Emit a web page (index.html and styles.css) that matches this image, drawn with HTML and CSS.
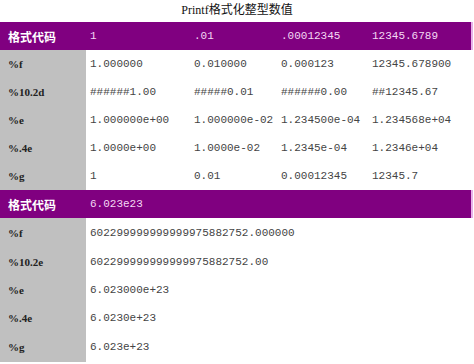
FILE: index.html
```html
<!DOCTYPE html>
<html>
<head>
<meta charset="utf-8">
<link rel="stylesheet" href="styles.css">
</head>
<body>
<div class="title">Printf格式化整型数值</div>
<table class="fmt">
<colgroup><col class="c1"><col class="c2"><col class="c3"><col class="c4"><col class="c5"></colgroup>
<tr class="head"><th>格式代码</th><td>1</td><td>.01</td><td>.00012345</td><td>12345.6789</td></tr>
<tr><th>%f</th><td>1.000000</td><td>0.010000</td><td>0.000123</td><td>12345.678900</td></tr>
<tr><th>%10.2d</th><td>######1.00</td><td>#####0.01</td><td>######0.00</td><td>##12345.67</td></tr>
<tr><th>%e</th><td>1.000000e+00</td><td>1.000000e-02</td><td>1.234500e-04</td><td>1.234568e+04</td></tr>
<tr><th>%.4e</th><td>1.0000e+00</td><td>1.0000e-02</td><td>1.2345e-04</td><td>1.2346e+04</td></tr>
<tr><th>%g</th><td>1</td><td>0.01</td><td>0.00012345</td><td>12345.7</td></tr>
<tr class="head"><th>格式代码</th><td colspan="4">6.023e23</td></tr>
<tr class="tall"><th>%f</th><td colspan="4">602299999999999975882752.000000</td></tr>
<tr><th>%10.2e</th><td colspan="4">602299999999999975882752.00</td></tr>
<tr><th>%e</th><td colspan="4">6.023000e+23</td></tr>
<tr><th>%.4e</th><td colspan="4">6.0230e+23</td></tr>
<tr class="tall"><th>%g</th><td colspan="4">6.023e+23</td></tr>
</table>
</body>
</html>
```
FILE: styles.css
```css
html, body { margin: 0; padding: 0; background: #fff; }
.title {
  font-family: "Liberation Serif", "Noto Sans CJK SC", serif;
  font-size: 12px;
  text-align: center;
  height: 22px;
  line-height: 21px;
  color: #111;
}
.fmt {
  border-collapse: collapse;
  width: 472px;
  table-layout: fixed;
}
.c1 { width: 86px; }
.c2 { width: 104px; }
.c3 { width: 87px; }
.c4 { width: 91px; }
.c5 { width: 104px; }
.fmt th, .fmt td {
  height: 28px;
  padding: 0 0 0 5px;
  text-align: left;
  vertical-align: middle;
  white-space: nowrap;
  overflow: hidden;
}
.fmt tr.tall th, .fmt tr.tall td { height: 30px; }
.fmt th {
  background: #c0c0c0;
  font-family: "Liberation Serif", serif;
  font-weight: bold;
  font-size: 11px;
  color: #222;
  padding-left: 8px;
}
.fmt td {
  font-family: "Liberation Mono", monospace;
  font-size: 11px;
  color: #444;
  padding-left: 4px;
}
.fmt tr.head th, .fmt tr.head td {
  background: #800080;
  color: #f4d8f4;
}
.fmt tr.head th {
  font-family: "Noto Sans CJK SC", sans-serif;
  font-size: 12px;
  color: #fff;
  padding-left: 8px;
}
.fmt tr.head td:last-child { border-right: 2px solid #e8b0e8; }
```
